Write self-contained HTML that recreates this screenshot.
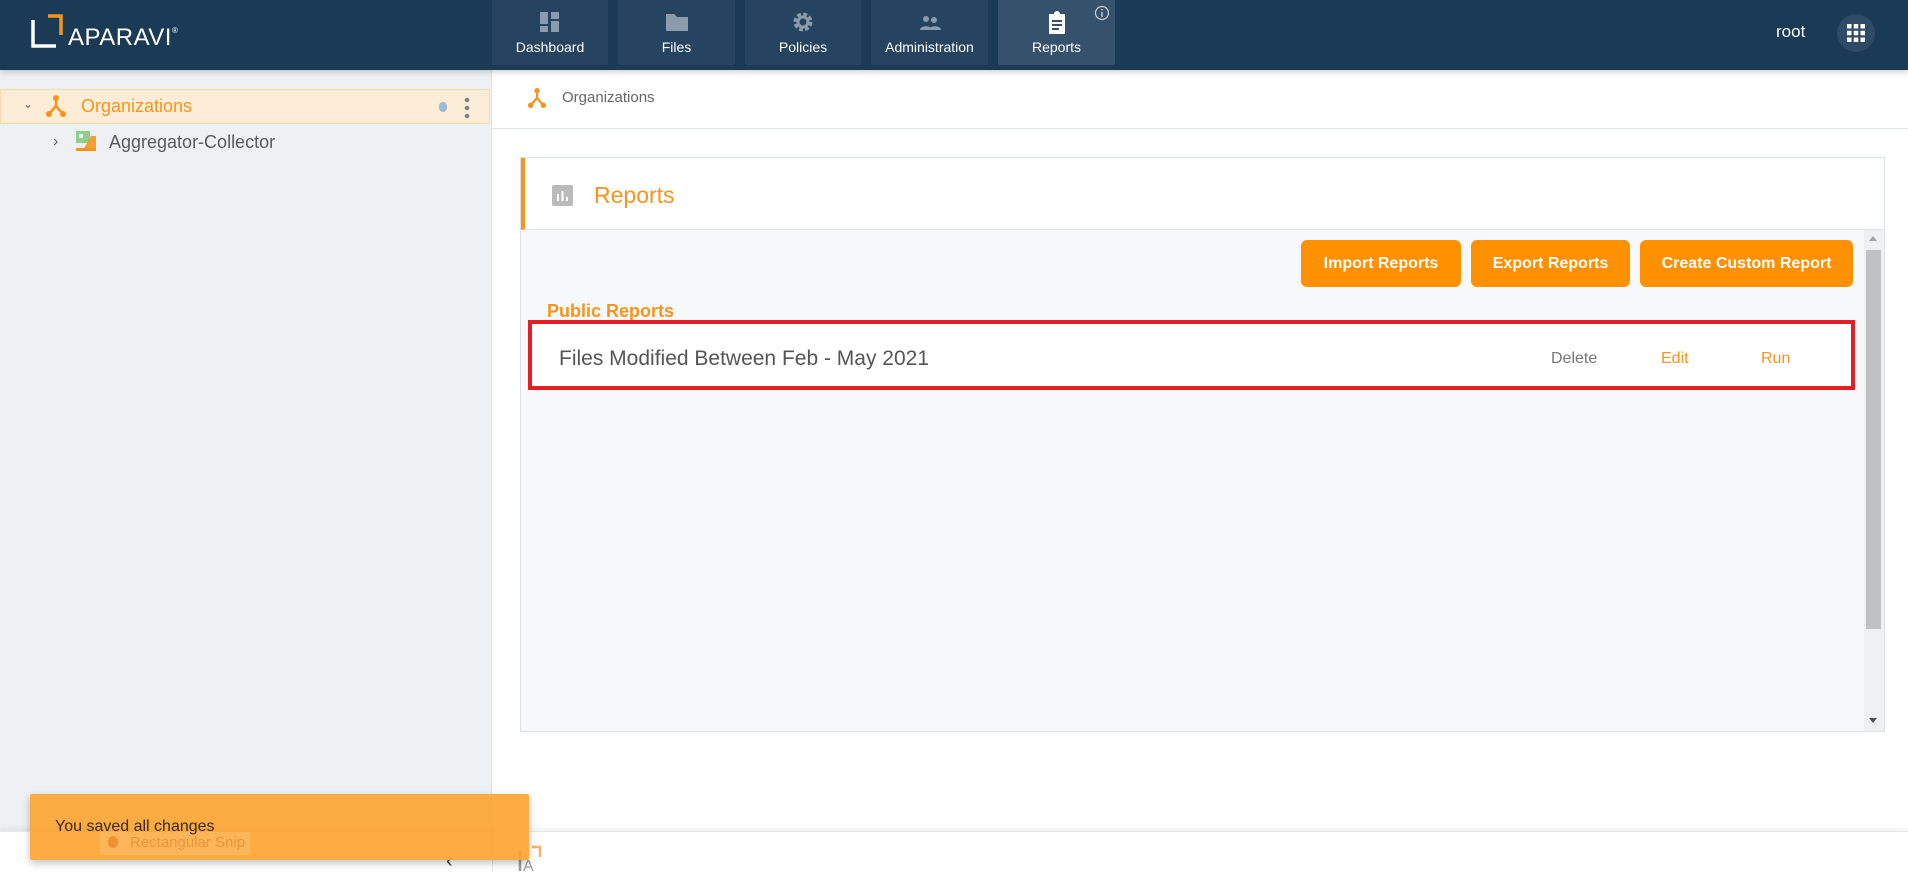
<!DOCTYPE html>
<html><head><meta charset="utf-8"><style>
*{box-sizing:border-box;margin:0;padding:0}
body{width:1908px;height:871px;overflow:hidden;background:#fff;font-family:"Liberation Sans",sans-serif;position:relative}
.hdr{position:absolute;left:0;top:0;width:1908px;height:70px;background:#1b3a56;box-shadow:0 2px 6px rgba(0,0,0,.2);z-index:3}
.tab{position:absolute;top:0;height:65px;background:#26445f;color:#fff;font-size:14px;text-align:center;border-radius:0 0 2px 2px}
.tab.act{background:#35516b}
.tab svg{position:absolute;left:50%;top:11px;transform:translateX(-50%)}
.tab span{position:absolute;left:0;right:0;top:39px}
.side{position:absolute;left:0;top:70px;width:492px;height:801px;background:#eef1f4;border-right:1px solid #dde2e7}
.abs{position:absolute}
</style></head><body>
<div class="hdr">
  <svg class="abs" style="left:30px;top:13px" width="176" height="36" viewBox="0 0 176 36">
    <path d="M3 7 V33 H26" fill="none" stroke="#fff" stroke-width="3.5"/>
    <path d="M18 3 H31 V22" fill="none" stroke="#f7941d" stroke-width="3.5"/>
    <text x="38" y="32" fill="#fff" font-family="Liberation Sans" font-size="24" letter-spacing="0.5">APARAVI</text>
    <text x="142" y="20" fill="#fff" font-size="8">®</text>
  </svg>
  <div class="tab" style="left:492px;width:116px"><svg width="22" height="22" viewBox="0 0 22 22" fill="#8a9bab"><rect x="1" y="1" width="8" height="12"/><rect x="12" y="1" width="8" height="7"/><rect x="1" y="15" width="8" height="6"/><rect x="12" y="10" width="8" height="11"/></svg><span>Dashboard</span></div>
  <div class="tab" style="left:618px;width:117px"><svg width="24" height="22" viewBox="0 0 24 22" fill="#8a9bab"><path d="M1 3h8l3 3h11v14H1z"/></svg><span>Files</span></div>
  <div class="tab" style="left:745px;width:116px"><svg width="22" height="22" viewBox="0 0 22 22"><circle cx="11" cy="11" r="7" fill="none" stroke="#8a9bab" stroke-width="5" stroke-dasharray="3.5 2"/><circle cx="11" cy="11" r="5" fill="none" stroke="#8a9bab" stroke-width="3"/></svg><span>Policies</span></div>
  <div class="tab" style="left:871px;width:117px"><svg width="24" height="22" viewBox="0 0 24 22" fill="#8a9bab"><circle cx="8" cy="8" r="3"/><circle cx="16" cy="9" r="3"/><path d="M2 19c0-5 12-5 12 0zM11 19c0-5 12-5 12 0z"/></svg><span>Administration</span></div>
  <div class="tab act" style="left:998px;width:117px"><svg width="20" height="24" viewBox="0 0 20 24" fill="#fff"><path d="M2 3h5a3 3 0 0 1 6 0h5v20H2z"/><rect x="5" y="9" width="10" height="2" fill="#35516b"/><rect x="5" y="13" width="10" height="2" fill="#35516b"/><rect x="5" y="17" width="7" height="2" fill="#35516b"/></svg><span>Reports</span></div>
  <svg class="abs" style="left:1094px;top:5px" width="16" height="16" viewBox="0 0 16 16"><circle cx="8" cy="8" r="6.5" fill="none" stroke="#c7d0d9" stroke-width="1.2"/><rect x="7.3" y="7" width="1.4" height="5" fill="#c7d0d9"/><rect x="7.3" y="4" width="1.4" height="1.5" fill="#c7d0d9"/></svg>
  <div class="abs" style="left:1776px;top:22px;color:#fff;font-size:17px">root</div>
  <div class="abs" style="left:1837px;top:14px;width:38px;height:38px;border-radius:50%;background:#2e4a65">
    <svg class="abs" style="left:10px;top:10px" width="18" height="18" viewBox="0 0 18 18" fill="#fff"><rect x="0" y="0" width="4.5" height="4.5"/><rect x="6.75" y="0" width="4.5" height="4.5"/><rect x="13.5" y="0" width="4.5" height="4.5"/><rect x="0" y="6.75" width="4.5" height="4.5"/><rect x="6.75" y="6.75" width="4.5" height="4.5"/><rect x="13.5" y="6.75" width="4.5" height="4.5"/><rect x="0" y="13.5" width="4.5" height="4.5"/><rect x="6.75" y="13.5" width="4.5" height="4.5"/><rect x="13.5" y="13.5" width="4.5" height="4.5"/></svg>
  </div>
</div>

<div class="side">
  <div class="abs" style="left:0;top:19px;width:490px;height:35px;background:#fdecd6;border:1px solid #f8d9b0"></div>
  <div class="abs" style="left:23px;top:27px;color:#666;font-size:12px">⌄</div>
  <svg class="abs" style="left:45px;top:24px" width="22" height="24" viewBox="0 0 22 24"><path d="M11 4V12L4 20M11 12L18 20" fill="none" stroke="#f7941d" stroke-width="2.5"/><circle cx="11" cy="4" r="3" fill="#f7941d"/><circle cx="4" cy="20" r="3" fill="#f7941d"/><circle cx="18" cy="20" r="3" fill="#f7941d"/></svg>
  <div class="abs" style="left:81px;top:26px;color:#f7941d;font-size:18px">Organizations</div>
  <div class="abs" style="left:439px;top:32px;width:8px;height:10px;border-radius:4px;background:#9dbad3"></div>
  <svg class="abs" style="left:464px;top:27px" width="6" height="22" viewBox="0 0 6 22" fill="#7a8591"><circle cx="3" cy="3" r="2.3"/><circle cx="3" cy="11" r="2.3"/><circle cx="3" cy="19" r="2.3"/></svg>
  <div class="abs" style="left:53px;top:63px;color:#666;font-size:16px">›</div>
  <svg class="abs" style="left:75px;top:60px" width="22" height="22" viewBox="0 0 22 22"><rect x="1" y="1" width="14" height="12" fill="#8fcf8a"/><rect x="4" y="4" width="4" height="4" fill="#eef1f4"/><path d="M8 20 L16 6 H21 V20 Z" fill="#f7941d" opacity=".9"/><rect x="1" y="18" width="20" height="3" fill="#f7941d"/></svg>
  <div class="abs" style="left:109px;top:62px;color:#5a5a5a;font-size:18px">Aggregator-Collector</div>
</div>

<svg class="abs" style="left:527px;top:87px" width="20" height="22" viewBox="0 0 22 24"><path d="M11 4V12L4 20M11 12L18 20" fill="none" stroke="#f7941d" stroke-width="2.5"/><circle cx="11" cy="4" r="3" fill="#f7941d"/><circle cx="4" cy="20" r="3" fill="#f7941d"/><circle cx="18" cy="20" r="3" fill="#f7941d"/></svg>
<div class="abs" style="left:562px;top:89px;color:#666;font-size:15px">Organizations</div>
<div class="abs" style="left:492px;top:128px;width:1416px;height:1px;background:#dfe5ea"></div>

<div class="abs" style="left:520px;top:157px;width:1365px;height:575px;border:1px solid #dde2e7;background:#f7f8fa">
  <div class="abs" style="left:0;top:0;width:1363px;height:72px;background:#fff;border-bottom:1px solid #dde2e7;border-left:4px solid #f7941d"></div>
  <svg class="abs" style="left:31px;top:27px" width="21" height="21" viewBox="0 0 21 21"><rect width="21" height="21" rx="2" fill="#bbb"/><rect x="5" y="9" width="2" height="7" fill="#fff"/><rect x="9.5" y="6" width="2" height="10" fill="#fff"/><rect x="14" y="12" width="2" height="4" fill="#fff"/></svg>
  <div class="abs" style="left:73px;top:24px;color:#f7941d;font-size:23px">Reports</div>
  <div class="abs" style="left:780px;top:82px;width:160px;height:47px;background:#ff9000;border-radius:6px;color:#fff;font-weight:bold;font-size:16px;text-align:center;line-height:47px">Import Reports</div>
  <div class="abs" style="left:950px;top:82px;width:159px;height:47px;background:#ff9000;border-radius:6px;color:#fff;font-weight:bold;font-size:16px;text-align:center;line-height:47px">Export Reports</div>
  <div class="abs" style="left:1119px;top:82px;width:213px;height:47px;background:#ff9000;border-radius:6px;color:#fff;font-weight:bold;font-size:16px;text-align:center;line-height:47px">Create Custom Report</div>
  <div class="abs" style="left:26px;top:143px;color:#f7941d;font-size:18px;font-weight:bold">Public Reports</div>
  <div class="abs" style="left:7px;top:162px;width:1327px;height:70px;border:4px solid #e31e24;background:#fff"></div>
  <div class="abs" style="left:38px;top:189px;color:#555;font-size:21px">Files Modified Between Feb - May 2021</div>
  <div class="abs" style="left:1030px;top:192px;color:#777;font-size:16px">Delete</div>
  <div class="abs" style="left:1140px;top:192px;color:#f7941d;font-size:16px">Edit</div>
  <div class="abs" style="left:1240px;top:192px;color:#f7941d;font-size:16px">Run</div>
  <div class="abs" style="left:1343px;top:72px;width:20px;height:501px;background:#f0f0f0"></div>
  <div class="abs" style="left:1345px;top:92px;width:15px;height:379px;background:#c1c1c1"></div>
  <div class="abs" style="left:1348px;top:78px;width:0;height:0;border-left:4px solid transparent;border-right:4px solid transparent;border-bottom:5px solid #a3a3a3"></div>
  <div class="abs" style="left:1348px;top:560px;width:0;height:0;border-left:4px solid transparent;border-right:4px solid transparent;border-top:5px solid #505050"></div>
</div>

<div class="abs" style="left:0;top:831px;width:1908px;height:40px;background:#fff;box-shadow:0 -3px 5px rgba(0,0,0,.06);border-top:1px solid #e8e8e8"></div>
<div class="abs" style="left:492px;top:831px;width:1px;height:40px;background:#e3e3e3"></div>
<div class="abs" style="left:446px;top:850px;color:#444;font-size:20px">‹</div>
<svg class="abs" style="left:518px;top:845px" width="24" height="26" viewBox="0 0 24 26"><path d="M2 6V26" stroke="#999" stroke-width="2.5" fill="none"/><path d="M14 2H22V12" stroke="#f7b070" stroke-width="2.5" fill="none"/><text x="5" y="26" font-size="16" fill="#999">A</text></svg>

<div class="abs" style="left:30px;top:794px;width:499px;height:66px;background:rgba(252,160,40,.88);box-shadow:0 3px 8px rgba(0,0,0,.25);border-radius:2px">
  <div class="abs" style="left:70px;top:38px;width:150px;height:23px;background:rgba(255,255,255,.12)"></div>
  <div class="abs" style="left:78px;top:42px;width:10px;height:12px;border-radius:5px;background:rgba(230,120,20,.6)"></div>
  <div class="abs" style="left:100px;top:40px;color:rgba(220,120,30,.55);font-size:15px">Rectangular Snip</div>
  <div class="abs" style="left:25px;top:24px;color:#3a2a1a;font-size:16px">You saved all changes</div>
</div>
</body></html>
